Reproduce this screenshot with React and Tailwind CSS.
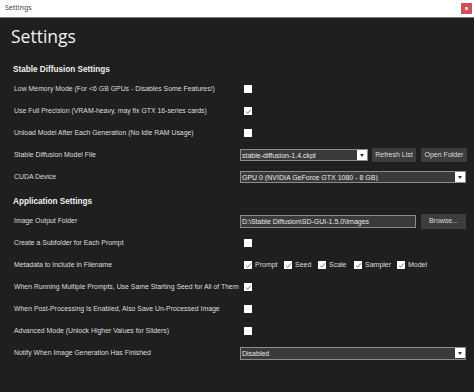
import React from "react";

const labelFont = { fontFamily: '"Liberation Sans", Arial, sans-serif' };

function Check({ checked }) {
  return (
    <div className="ml-[4px] w-[8px] h-[8px] bg-white flex items-center justify-center shrink-0">
      {checked && (
        <svg width="7" height="7" viewBox="0 0 8 8">
          <path d="M1.2 4.2 L3.1 6 L6.8 1.6" fill="none" stroke="#555" strokeWidth="0.9" />
        </svg>
      )}
    </div>
  );
}

function Select({ value, className }) {
  return (
    <div className={`h-[12px] border border-[#8c8c8c] bg-[#3a3a3a] flex items-center ${className}`}>
      <span className="flex-1 pl-[1px] text-[7px] text-[#e8e8e8] leading-none truncate">{value}</span>
      <div className="w-[10px] h-[10px] bg-white flex items-center justify-center">
        <svg width="4" height="3" viewBox="0 0 4 3">
          <path d="M0 0 H4 L2 3 Z" fill="#333" />
        </svg>
      </div>
    </div>
  );
}

function Btn({ children, className }) {
  return (
    <div className={`h-[14px] bg-[#3d3d3d] text-[#dcdcdc] text-[7px] flex items-center justify-center ${className}`}>
      {children}
    </div>
  );
}

function Row({ label, children }) {
  return (
    <div className="grid grid-cols-[226px_1fr] h-[22px] items-center">
      <span className="text-[6.9px] text-[#dedede] whitespace-nowrap">{label}</span>
      <div className="flex items-center">{children}</div>
    </div>
  );
}

const metaOpts = [
  ["Prompt", "w-[40px]"],
  ["Seed", "w-[34px]"],
  ["Scale", "w-[36px]"],
  ["Sampler", "w-[43px]"],
  ["Model", "w-[40px]"],
];

export default function App() {
  return (
    <div className="w-[474px] h-[392px] bg-[#1f1f1f] flex flex-col overflow-hidden" style={labelFont}>
      {/* title bar */}
      <div className="h-[18px] bg-white border-b border-[#7a7a7a] flex items-center justify-between pl-[5px] pr-[2px] shrink-0">
        <span className="text-[7px] text-[#444]" style={{ fontFamily: '"Noto Sans", "Open Sans", sans-serif' }}>Settings</span>
        <div className="w-[11px] h-[11px] bg-[#cc5259] flex items-center justify-center">
          <div className="w-[3px] h-[3px] bg-[#f3c9cb]" />
        </div>
      </div>

      <div className="pl-[11px] h-[44px] flex items-center" style={{ fontFamily: '"Open Sans", "Noto Sans", sans-serif' }}>
        <h1 className="text-[17.5px] text-[#f2f2f2] leading-none pb-[6px]">Settings</h1>
      </div>

      <div className="pl-[14px]">
        <div className="h-[16px] flex items-center -ml-[1px]">
          <h2 className="text-[8.2px] font-bold text-[#f0f0f0]">Stable Diffusion Settings</h2>
        </div>

        <Row label="Low Memory Mode (For <6 GB GPUs - Disables Some Features!)"><Check /></Row>
        <Row label="Use Full Precision (VRAM-heavy, may fix GTX 16-series cards)"><Check checked /></Row>
        <Row label="Unload Model After Each Generation (No Idle RAM Usage)"><Check /></Row>
        <Row label="Stable Diffusion Model File">
          <Select value="stable-diffusion-1.4.ckpt" className="w-[128px]" />
          <Btn className="ml-[4px] w-[44px]">Refresh List</Btn>
          <Btn className="ml-[5px] w-[46px]">Open Folder</Btn>
        </Row>
        <Row label="CUDA Device">
          <Select value="GPU 0 (NVIDIA GeForce GTX 1080 - 8 GB)" className="w-[226px]" />
        </Row>

        <div className="h-[22px] pt-[6px] -ml-[1px]">
          <h2 className="text-[8.2px] font-bold text-[#f0f0f0] leading-[16px]">Application Settings</h2>
        </div>

        <Row label="Image Output Folder">
          <div className="w-[176px] h-[13px] border border-[#8c8c8c] bg-[#3a3a3a] flex items-center">
            <span className="pl-[1px] text-[7px] text-[#e8e8e8] leading-none">D:\Stable Diffusion\SD-GUI-1.5.0\Images</span>
          </div>
          <Btn className="ml-[5px] w-[45px] h-[15px]">Browse...</Btn>
        </Row>
        <Row label="Create a Subfolder for Each Prompt"><Check /></Row>
        <Row label="Metadata to Include in Filename">
          {metaOpts.map(([name, w]) => (
            <div key={name} className={`flex items-center ${w}`}>
              <Check checked />
              <span className="ml-[3px] text-[7px] text-[#dedede]">{name}</span>
            </div>
          ))}
        </Row>
        <Row label="When Running Multiple Prompts, Use Same Starting Seed for All of Them"><Check checked /></Row>
        <Row label="When Post-Processing Is Enabled, Also Save Un-Processed Image"><Check /></Row>
        <Row label="Advanced Mode (Unlock Higher Values for Sliders)"><Check /></Row>
        <Row label="Notify When Image Generation Has Finished">
          <Select value="Disabled" className="w-[226px] h-[13px]" />
        </Row>
      </div>
    </div>
  );
}
